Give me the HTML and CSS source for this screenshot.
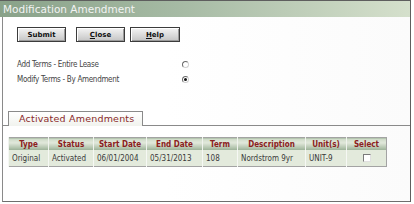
FILE: index.html
```html
<!DOCTYPE html>
<html>
<head>
<meta charset="utf-8">
<link rel="stylesheet" href="styles.css">
</head>
<body>
<div class="window">
  <div class="title">Modification Amendment</div>
  <div class="body">
    <div class="buttons">
      <button class="btn btn-submit">Submit</button>
      <button class="btn btn-close"><u>C</u>lose</button>
      <button class="btn btn-help"><u>H</u>elp</button>
    </div>
    <div class="options">
      <div class="opt-label">Add Terms - Entire Lease</div>
      <span class="radio"></span>
      <div class="opt-label">Modify Terms - By Amendment</div>
      <span class="radio checked"></span>
    </div>
    <div class="tabstrip">
      <div class="tab">Activated Amendments</div>
    </div>
    <table class="grid">
      <thead>
        <tr>
          <th class="c-type">Type</th>
          <th class="c-status">Status</th>
          <th class="c-start">Start Date</th>
          <th class="c-end">End Date</th>
          <th class="c-term">Term</th>
          <th class="c-desc">Description</th>
          <th class="c-unit">Unit(s)</th>
          <th class="c-sel">Select</th>
        </tr>
      </thead>
      <tbody>
        <tr>
          <td>Original</td>
          <td>Activated</td>
          <td>06/01/2004</td>
          <td>05/31/2013</td>
          <td>108</td>
          <td>Nordstrom 9yr</td>
          <td>UNIT-9</td>
          <td class="sel"><span class="check"></span></td>
        </tr>
      </tbody>
    </table>
  </div>
</div>
</body>
</html>
```
FILE: styles.css
```css
html, body {
  margin: 0;
  padding: 0;
  background: #ffffff;
}
body {
  font-family: "DejaVu Sans", Verdana, sans-serif;
  width: 414px;
  height: 204px;
  overflow: hidden;
}
.window {
  width: 410px;
  height: 201px;
  border-top: 1px solid #5e5e5e;
  border-right: 1px solid #5e5e5e;
  display: flex;
  flex-direction: column;
}
.title {
  height: 16px;
  line-height: 16px;
  padding-left: 3px;
  font-size: 10.5px;
  color: #f3f3f3;
  background: linear-gradient(90deg, #89a289 0%, #a7bba5 45%, #d5e0cc 100%);
  white-space: nowrap;
}
.body {
  flex: 1;
  margin-left: 2px;
  border-left: 1px solid #8a8a8a;
  border-bottom: 1px solid #6e6e6e;
  padding-top: 10px;
  background: linear-gradient(90deg, #ffffff 40%, #fbfbfb 100%);
}
.buttons {
  display: flex;
  padding-left: 14px;
  gap: 10px;
}
.btn {
  width: 49px;
  height: 15px;
  padding: 0;
  margin: 0;
  font-family: "DejaVu Sans", Verdana, sans-serif;
  font-size: 7px;
  font-weight: bold;
  color: #111;
  border: 1px solid #3c3c3c;
  background: linear-gradient(#f4f4f4, #d8d8d8 60%, #c4c4c4);
  box-shadow: inset 1px 1px 0 #ffffff, inset -1px -1px 0 #9a9a9a;
}
.btn u {
  text-decoration: underline;
}
.btn-help {
  margin-left: -5px;
  width: 50px;
}
.options {
  display: grid;
  grid-template-columns: 165px 8px;
  row-gap: 8px;
  align-items: center;
  padding-left: 14px;
  margin-top: 19px;
  font-family: "DejaVu Sans Condensed", "DejaVu Sans", sans-serif;
  font-stretch: condensed;
  font-size: 8px;
  letter-spacing: -0.3px;
  color: #444444;
}
.opt-label {
  line-height: 7px;
  white-space: nowrap;
}
.radio {
  width: 5px;
  height: 5px;
  border-radius: 50%;
  border: 1px solid #6a6a6a;
  border-right-color: #d0d0d0;
  border-bottom-color: #d0d0d0;
  background: #fff;
  position: relative;
}
.radio.checked::after {
  content: "";
  position: absolute;
  left: 1px;
  top: 1px;
  width: 3px;
  height: 3px;
  border-radius: 50%;
  background: #111;
}
.tabstrip {
  margin-top: 28px;
  height: 14px;
  border-bottom: 1px solid #8a8a8a;
  display: flex;
  padding-left: 5px;
}
.tab {
  width: 135px;
  height: 15px;
  box-sizing: border-box;
  border: 1px solid #8a8a8a;
  border-bottom: none;
  background: linear-gradient(#ffffff, #f1f3ee);
  font-size: 9.5px;
  color: #8a2a2a;
  line-height: 14px;
  padding-left: 10px;
  letter-spacing: 0.2px;
  white-space: nowrap;
}
.grid {
  margin-top: 11px;
  margin-left: 5px;
  border-collapse: collapse;
  border: 1px solid #a3a3a3;
  font-family: "DejaVu Sans Condensed", "DejaVu Sans", sans-serif;
  font-stretch: condensed;
  font-size: 8px;
  table-layout: fixed;
  width: 370px;
}
.grid th {
  height: 12px;
  padding: 0;
  font-weight: bold;
  color: #8b2020;
  background: linear-gradient(#cbd8c5, #e2e9dc 35%, #b6c7b1 75%, #98ae94);
  border-left: 1px solid #f0f3ee;
  text-align: center;
  white-space: nowrap;
}
.grid td {
  height: 16px;
  padding: 0 0 0 3px;
  color: #3a3a3a;
  background: #e3eadc;
  border-left: 1px solid #f6f8f4;
  white-space: nowrap;
}
.grid td.sel {
  text-align: center;
  padding: 0;
}
.c-type { width: 39px; }
.c-status { width: 44px; }
.c-start { width: 52px; }
.c-end { width: 55px; }
.c-term { width: 34px; }
.c-desc { width: 67px; }
.c-unit { width: 40px; }
.c-sel { width: 39px; }
.check {
  display: inline-block;
  width: 6px;
  height: 6px;
  vertical-align: middle;
  background: #fff;
  border: 1px solid #7a7a7a;
  border-right-color: #e0e0e0;
  border-bottom-color: #e0e0e0;
}
```
